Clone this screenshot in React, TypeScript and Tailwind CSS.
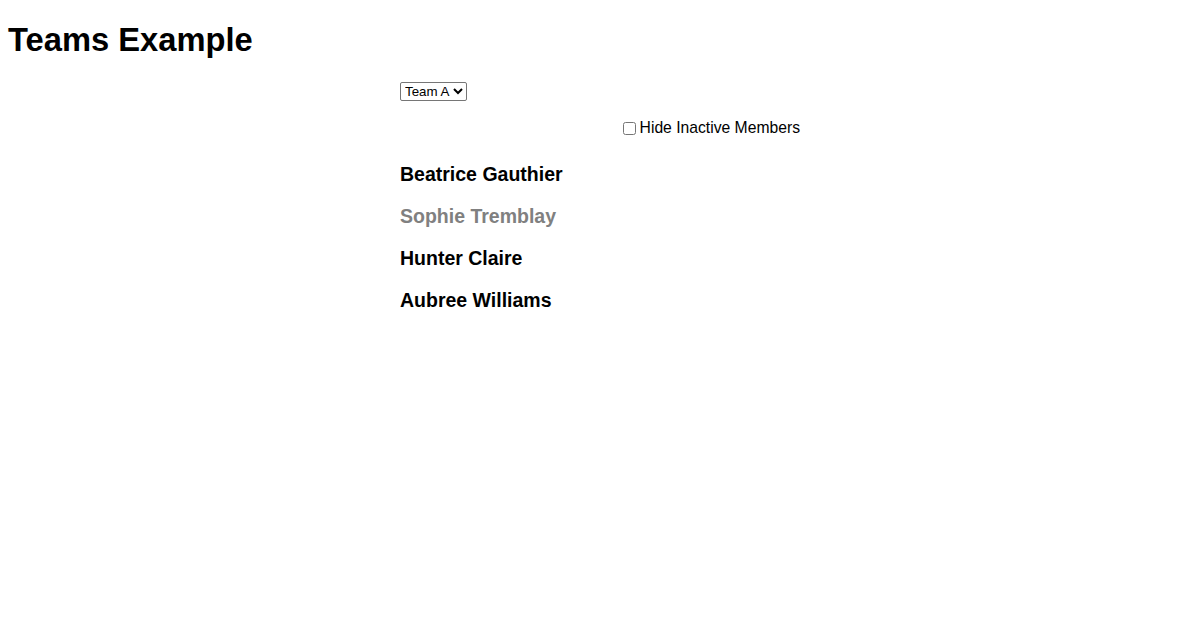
import React, { useState } from 'react';

type Member = { name: string; active: boolean };

const teams: Record<string, Member[]> = {
  'Team A': [
    { name: 'Beatrice Gauthier', active: true },
    { name: 'Sophie Tremblay', active: false },
    { name: 'Hunter Claire', active: true },
    { name: 'Aubree Williams', active: true },
  ],
  'Team B': [
    { name: 'Liam Roy', active: true },
    { name: 'Noah Gagnon', active: false },
  ],
};

const App: React.FC = () => {
  const [team, setTeam] = useState('Team A');
  const [hideInactive, setHideInactive] = useState(false);

  const members = teams[team].filter((m) => !hideInactive || m.active);

  return (
    <div className="min-h-screen bg-white p-2 font-['Liberation_Sans',Arial,sans-serif] text-black">
      <h1 className="mt-[13px] text-[32.7px] font-bold leading-[38px]">Teams Example</h1>
      <div className="mx-auto w-[400px]">
        <select
          value={team}
          onChange={(e) => setTeam(e.target.value)}
          className="mt-[23px] block h-[19px] w-[67px] rounded-[2px] border border-[#767676] bg-white text-[13.33px] leading-[15px]"
        >
          {Object.keys(teams).map((t) => (
            <option key={t} value={t}>
              {t}
            </option>
          ))}
        </select>

        <div className="mt-[18px] flex h-[18px] items-center justify-end text-[15.7px] leading-[18px]">
          <label className="flex items-center">
            <input
              type="checkbox"
              checked={hideInactive}
              onChange={(e) => setHideInactive(e.target.checked)}
              className="mr-[4px] h-[13px] w-[13px]"
            />
            Hide Inactive Members
          </label>
        </div>

        <div className="mt-[26px] flex flex-col gap-[20px]">
          {members.map((m) => (
            <h3
              key={m.name}
              className={`text-[19.5px] font-bold leading-[22px] ${m.active ? 'text-black' : 'text-[#808080]'}`}
            >
              {m.name}
            </h3>
          ))}
        </div>
      </div>
    </div>
  );
};

export default App;
